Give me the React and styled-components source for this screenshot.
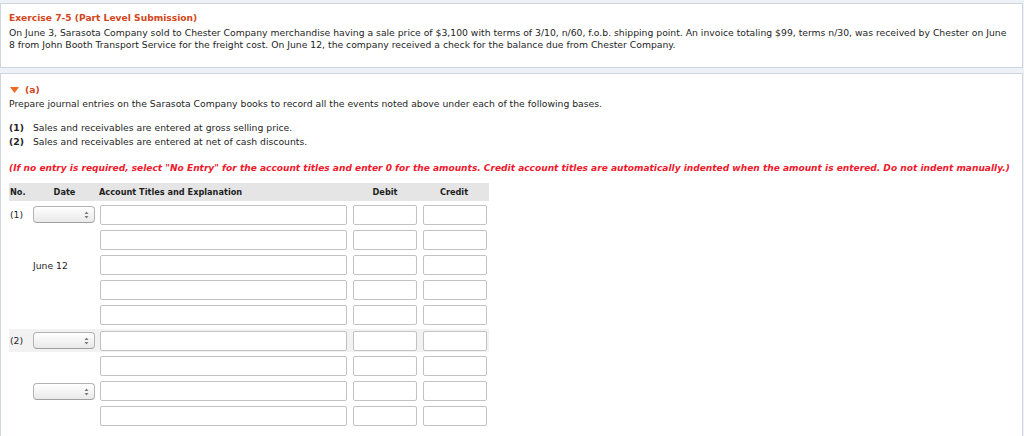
import React from "react";
import styled, { createGlobalStyle } from "styled-components";

const Global = createGlobalStyle`
  html, body { margin: 0; padding: 0; }
  body {
    background: #eef2f7;
    font-family: "DejaVu Sans", Verdana, sans-serif;
    font-size: 9.25px;
    color: #1e1e1e;
  }
`;

const Page = styled.div`
  padding-top: 3px;
  width: 1023px;
  display: flex;
  flex-direction: column;
  gap: 5px;
`;

const Panel = styled.section`
  background: #fff;
  border: 1px solid #cdd5e1;
  padding: ${(p) => p.$pad};
  min-height: ${(p) => p.$minH || "auto"};
  box-sizing: border-box;
`;

const Title = styled.h1`
  margin: 0 0 3px;
  font-size: 9.15px;
  font-weight: bold;
  color: #d4461b;
  line-height: 12px;
`;

const Para = styled.p`
  margin: 0;
  line-height: 12px;
`;

const PartHead = styled.div`
  display: flex;
  align-items: center;
  gap: 6px;
  color: #d4461b;
  font-weight: bold;
  line-height: 12px;
  margin-bottom: 2px;
  padding-left: 1px;
`;

const Prompt = styled.p`
  margin: 0 0 12px;
  line-height: 12px;
`;

const Bases = styled.ol`
  list-style: none;
  margin: 0 0 14px;
  padding: 0;
  display: flex;
  flex-direction: column;
  gap: 2px;
`;

const Basis = styled.li`
  display: flex;
  line-height: 12px;
  b { width: 24px; }
`;

const Note = styled.p`
  margin: 0 0 9px;
  font-size: 9.05px;
  color: #f0182c;
  font-weight: bold;
  font-style: italic;
  line-height: 12px;
`;

const Journal = styled.div`
  width: 480px;
  display: flex;
  flex-direction: column;
  gap: 2.2px;
`;

const Grid = styled.div`
  display: grid;
  grid-template-columns: 22px 67px 253px 70px 68px;
  align-items: center;
`;

const HeadRow = styled(Grid)`
  height: 18px;
  background: #e5e5e5;
  font-weight: bold;
  font-size: 8.2px;
`;

const HeadCell = styled.div`
  text-align: ${(p) => p.$align || "left"};
  padding-left: ${(p) => p.$pl || 0}px;
  padding-right: ${(p) => p.$pr || 0}px;
`;

const Row = styled(Grid)`
  height: 23px;
  background: ${(p) => (p.$active ? "#f2f2f2" : "transparent")};
`;

const Cell = styled.div`
  display: flex;
  align-items: center;
  padding-left: ${(p) => p.$pl ?? 2}px;
`;

const Field = styled.input`
  box-sizing: border-box;
  width: ${(p) => p.$w}px;
  height: 20px;
  margin: 0;
  border: 1px solid #c2c2c2;
  border-radius: 2px;
  background: #fff;
  font: inherit;
  outline: none;
`;

const Select = styled.div`
  position: relative;
  box-sizing: border-box;
  width: 62px;
  height: 17px;
  border: 1px solid #b3b3b3;
  border-bottom-color: #a0a0a0;
  border-radius: 4px;
  background: linear-gradient(#ffffff, #e9e9e9);
  box-shadow: inset 0 1px 0 #fff;
`;

const Arrows = styled.svg`
  position: absolute;
  right: 5px;
  top: 4px;
`;

const DateText = styled.span`
  padding-left: 0;
`;

function DateSelect() {
  return (
    <Select>
      <Arrows width="5" height="8" viewBox="0 0 5 8">
        <path d="M2.5 0.5 L4.5 3 L0.5 3 Z" fill="#7a7a7a" />
        <path d="M2.5 7.5 L4.5 5 L0.5 5 Z" fill="#7a7a7a" />
      </Arrows>
    </Select>
  );
}

const rows = [
  { no: "(1)", date: "select" },
  {},
  { date: "June 12" },
  {},
  {},
  { no: "(2)", date: "select", active: true },
  {},
  { date: "select" },
  {},
];

export default function App() {
  return (
    <>
      <Global />
      <Page>
        <Panel $pad="8px 8px 16px 8px">
          <Title>Exercise 7-5 (Part Level Submission)</Title>
          <Para>
            On June 3, Sarasota Company sold to Chester Company merchandise having a sale price of $3,100 with terms of
            3/10, n/60, f.o.b. shipping point. An invoice totaling $99, terms n/30, was received by Chester on June 8
            from John Booth Transport Service for the freight cost. On June 12, the company received a check for the
            balance due from Chester Company.
          </Para>
        </Panel>
        <Panel $pad="10px 8px 10px 8px" $minH="370px">
          <PartHead>
            <svg width="9" height="6" viewBox="0 0 9 6">
              <path d="M0 0 H9 L4.5 6 Z" fill="#ee6a1e" />
            </svg>
            <span>(a)</span>
          </PartHead>
          <Prompt>
            Prepare journal entries on the Sarasota Company books to record all the events noted above under each of
            the following bases.
          </Prompt>
          <Bases>
            <Basis>
              <b>(1)</b>
              <span>Sales and receivables are entered at gross selling price.</span>
            </Basis>
            <Basis>
              <b>(2)</b>
              <span>Sales and receivables are entered at net of cash discounts.</span>
            </Basis>
          </Bases>
          <Note>
            (If no entry is required, select "No Entry" for the account titles and enter 0 for the amounts. Credit
            account titles are automatically indented when the amount is entered. Do not indent manually.)
          </Note>
          <Journal>
            <HeadRow>
              <HeadCell $pl={1}>No.</HeadCell>
              <HeadCell $align="center">Date</HeadCell>
              <HeadCell $pl={1}>Account Titles and Explanation</HeadCell>
              <HeadCell $align="center" $pr={2}>Debit</HeadCell>
              <HeadCell $align="center" $pr={2}>Credit</HeadCell>
            </HeadRow>
            {rows.map((r, i) => (
              <Row key={i} $active={r.active}>
                <Cell $pl={1}>{r.no}</Cell>
                <Cell>
                  {r.date === "select" ? <DateSelect /> : r.date ? <DateText>{r.date}</DateText> : null}
                </Cell>
                <Cell>
                  <Field $w={247} />
                </Cell>
                <Cell>
                  <Field $w={64} />
                </Cell>
                <Cell>
                  <Field $w={64} />
                </Cell>
              </Row>
            ))}
          </Journal>
        </Panel>
      </Page>
    </>
  );
}
